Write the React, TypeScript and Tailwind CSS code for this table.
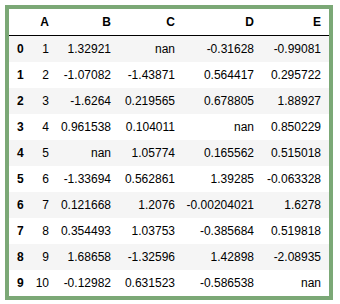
import React from "react";

const cols = ["A", "B", "C", "D", "E"];
const rows: string[][] = [
  ["1", "1.32921", "nan", "-0.31628", "-0.99081"],
  ["2", "-1.07082", "-1.43871", "0.564417", "0.295722"],
  ["3", "-1.6264", "0.219565", "0.678805", "1.88927"],
  ["4", "0.961538", "0.104011", "nan", "0.850229"],
  ["5", "nan", "1.05774", "0.165562", "0.515018"],
  ["6", "-1.33694", "0.562861", "1.39285", "-0.063328"],
  ["7", "0.121668", "1.2076", "-0.00204021", "1.6278"],
  ["8", "0.354493", "1.03753", "-0.385684", "0.519818"],
  ["9", "1.68658", "-1.32596", "1.42898", "-2.08935"],
  ["10", "-0.12982", "0.631523", "-0.586538", "nan"],
];

export default function App() {
  return (
    <div className="bg-white w-[340px] h-[304px] pt-[5px] pl-[5px]" style={{ fontFamily: '"Liberation Sans", Arial, sans-serif' }}>
      <div className="w-[328px] border-4 border-[#7ba876] bg-white text-[12px] text-black">
        <div className="grid grid-cols-[19px_29px_62px_64px_79px_67px] h-[27px] border-b border-black items-center font-bold">
          <div></div>
          {cols.map((c) => (
            <div key={c} className="text-right pr-2">{c}</div>
          ))}
        </div>
        {rows.map((r, i) => (
          <div
            key={i}
            className={
              "grid grid-cols-[19px_29px_62px_64px_79px_67px] h-[26px] items-center " +
              (i % 2 === 0 ? "bg-[#f5f5f5]" : "bg-white")
            }
          >
            <div className="pl-2 font-bold">{i}</div>
            {r.map((v, j) => (
              <div key={j} className="text-right pr-2 whitespace-nowrap">{v}</div>
            ))}
          </div>
        ))}
      </div>
    </div>
  );
}
